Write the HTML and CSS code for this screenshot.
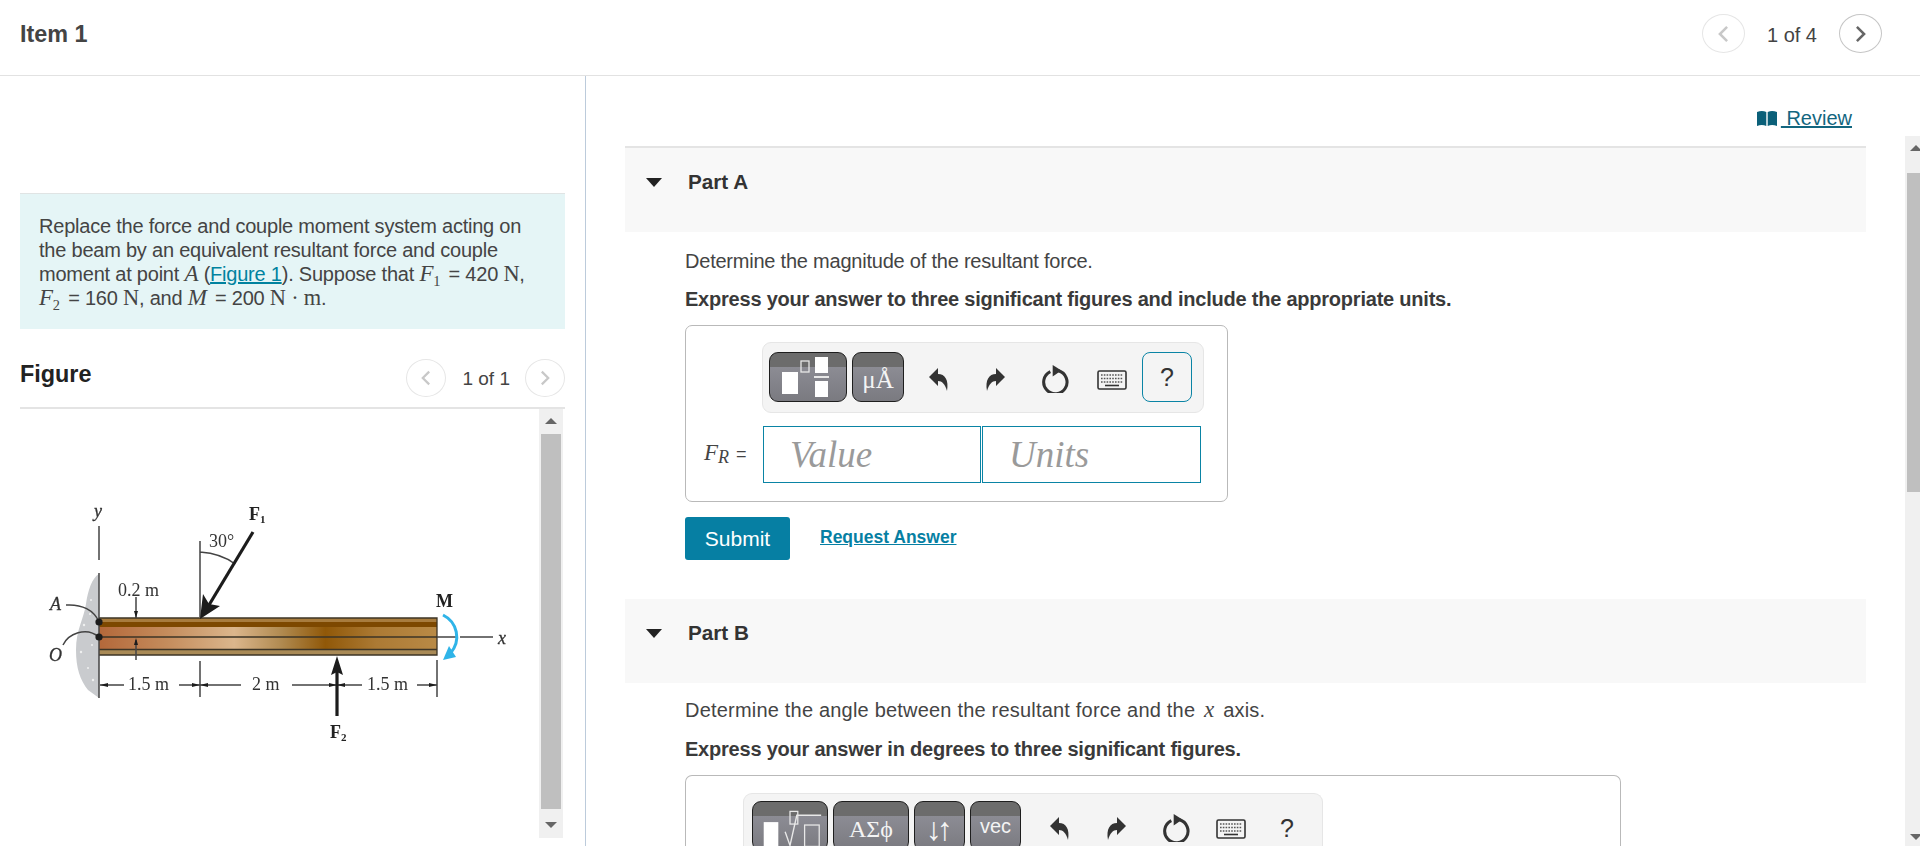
FILE: index.html
```html
<!DOCTYPE html>
<html lang="en">
<head>
<meta charset="utf-8">
<title>Item 1</title>
<link rel="stylesheet" href="styles.css">
</head>
<body>
<div class="app">
  <header class="top">
    <h1 class="item-title">Item 1</h1>
    <nav class="pager">
      <span class="circle circle-off"><svg viewBox="0 0 14 20" class="chev"><path d="M11 2 L3 10 L11 18"/></svg></span>
      <span class="pager-text">1 of 4</span>
      <span class="circle circle-on"><svg viewBox="0 0 14 20" class="chev"><path d="M3 2 L11 10 L3 18"/></svg></span>
    </nav>
  </header>
  <div class="panes">
    <aside class="left">
      <div class="intro">
        <p>Replace the force and couple moment system acting on the beam by an equivalent resultant force and couple moment at point <i class="m">A</i> (<a href="#">Figure 1</a>). Suppose that <i class="m">F</i><sub class="m">1</sub> = 420 <span class="m">N</span>, <i class="m">F</i><sub class="m">2</sub> = 160 <span class="m">N</span>, and <i class="m mm">M</i> = 200 <span class="m">N · m</span>.</p>
      </div>
      <div class="fig-head">
        <h2 class="fig-title">Figure</h2>
        <nav class="pager pager-small">
          <span class="circle circle-off"><svg viewBox="0 0 14 20" class="chev"><path d="M11 2 L3 10 L11 18"/></svg></span>
          <span class="pager-text">1 of 1</span>
          <span class="circle circle-off"><svg viewBox="0 0 14 20" class="chev"><path d="M3 2 L11 10 L3 18"/></svg></span>
        </nav>
      </div>
      <div class="fig-pane">
        <div class="fig-canvas">
          <svg class="beam" viewBox="20 500 519 260" width="519" height="260">
            <defs>
              <linearGradient id="wood" x1="0" x2="1" y1="0" y2="0">
                <stop offset="0" stop-color="#b4683a"/>
                <stop offset="0.2" stop-color="#c48c5c"/>
                <stop offset="0.4" stop-color="#dbb68c"/>
                <stop offset="0.54" stop-color="#b08a50"/>
                <stop offset="0.67" stop-color="#905808"/>
                <stop offset="0.82" stop-color="#ac7a34"/>
                <stop offset="1" stop-color="#b98a46"/>
              </linearGradient>
            </defs>
            <path class="wall" d="M99 574 C92 578 88 590 86 604 C84 618 76 630 76 650 C76 668 80 680 88 690 L99 698 Z"/>
            <g class="wall-spots"><circle cx="84" cy="625" r="1.2"/><circle cx="92" cy="645" r="1"/><circle cx="81" cy="652" r="1.2"/><circle cx="93" cy="680" r="1.2"/><circle cx="91" cy="600" r="1"/><circle cx="88" cy="668" r="1"/><circle cx="90" cy="614" r="1"/></g>
            <rect x="99" y="618" width="338" height="37" fill="url(#wood)"/>
            <rect x="99" y="618" width="338" height="5" fill="#a87c3e"/>
            <rect x="99" y="622" width="338" height="5" fill="#7d4800"/>
            <rect x="99" y="649" width="338" height="6" fill="#a98a56"/>
            <path class="ln" d="M99 618 H437 V655 H99"/>
            <path class="ln" d="M99 637 H437 M99 649.5 H437"/>
            <path class="thin" d="M99 526 V560 M99 573 V698"/>
            <path class="thin" d="M437 637 H458 M460 637 H493"/>
            <path class="thin" d="M200 541 V617 M200 552 C214 553 226 557 235 564"/>
            <path class="shaft" d="M253 532 L206 610"/>
            <path class="head" d="M200 619 L203 594 L209 604 L220 606 Z"/>
            <path class="thin" d="M136 597 V618 M136 640 V660"/>
            <path class="head" d="M136 618 L134 611 H138 Z M136 638 L134 645 H138 Z"/>
            <path class="thin" d="M66 605 C82 604 94 610 99 622 M63 645 C68 634 86 626 99 637"/>
            <circle cx="99" cy="622" r="3.6" fill="#1c1c1c"/><circle cx="99" cy="637" r="3.6" fill="#1c1c1c"/>
            <path class="thin" d="M200 661 V697 M437 660 V697 M100 685 H124 M179 685 H241 M292 685 H362 M417 685 H437"/>
            <path class="head" d="M100 685 L108 683 V687 Z M200 685 L192 683 V687 Z M200 685 L208 683 V687 Z M337 685 L329 683 V687 Z M337 685 L345 683 V687 Z M437 685 L429 683 V687 Z"/>
            <path class="shaft" d="M337 670 V716"/>
            <path class="head" d="M337 656 L343 675 L337 672 L331 675 Z"/>
            <path class="blue" d="M443 615 C457 622 462 640 450 654"/>
            <path class="blue-head" d="M443 660 L456 657 L449 646 Z"/>
            <text class="lab it" x="94" y="517">y</text>
            <text class="lab bd" x="249" y="520">F<tspan class="sb" dy="3">1</tspan></text>
            <text class="lab" x="209" y="547">30°</text>
            <text class="lab" x="118" y="596">0.2 m</text>
            <text class="lab bd" x="436" y="607">M</text>
            <text class="lab it" x="50" y="610">A</text>
            <text class="lab it" x="49" y="661">O</text>
            <text class="lab it" x="498" y="644">x</text>
            <text class="lab" x="128" y="690">1.5 m</text>
            <text class="lab" x="252" y="690">2 m</text>
            <text class="lab" x="367" y="690">1.5 m</text>
            <text class="lab bd" x="330" y="738">F<tspan class="sb" dy="3">2</tspan></text>
          </svg>
        </div>
        <div class="sbar sbar-fig">
          <span class="tri tri-up"></span>
          <span class="thumb"></span>
          <span class="tri tri-down"></span>
        </div>
      </div>
    </aside>
    <main class="right">
      <div class="content">
        <div class="review-row">
          <a class="review" href="#"><svg class="book" viewBox="0 0 20 16"><path d="M0 2 Q5 0 9.3 2 V16 Q5 14 0 16 Z M10.7 2 Q15 0 20 2 V16 Q15 14 10.7 16 Z"/></svg><span class="review-text">&nbsp;Review</span></a>
        </div>
        <section class="part">
          <div class="part-head"><span class="caret"></span><h3>Part A</h3></div>
          <div class="part-body">
            <p class="q">Determine the magnitude of the resultant force.</p>
            <p class="ask">Express your answer to three significant figures and include the appropriate units.</p>
            <div class="answer answer-a">
              <div class="toolbar toolbar-a">
                <span class="tbtn tbtn-tpl">
                  <svg viewBox="0 0 76 48" width="76" height="48">
                    <rect x="12" y="19" width="16" height="22" fill="#fff"/>
                    <rect x="31" y="8" width="8" height="11" fill="none" stroke="#e8e8e8" stroke-width="1.3"/>
                    <rect x="45" y="4" width="13" height="16" fill="#fff"/>
                    <rect x="44" y="23" width="15" height="2" fill="#e8e8e8"/>
                    <rect x="45" y="28" width="13" height="16" fill="#fff"/>
                  </svg>
                </span>
                <span class="tbtn tbtn-ua">μÅ</span>
                <span class="tools">
                  <svg class="ic" viewBox="0 0 24 26"><path class="ic-f" d="M2 11 L11 2 V8 C18 8 22 14 20 25 C18 18 15 15 11 15 V20 Z"/></svg>
                  <svg class="ic" viewBox="0 0 24 26"><path class="ic-f" d="M22 11 L13 2 V8 C6 8 2 14 4 25 C6 18 9 15 13 15 V20 Z"/></svg>
                  <svg class="ic ic-reset" viewBox="0 0 24 24"><path class="ic-s" d="M8 5.6 A10 10 0 1 0 15 5"/><path class="ic-f" d="M10 0 L17.5 4.8 L10 9.8 Z"/></svg>
                  <svg class="ic ic-kb" viewBox="0 0 30 20"><rect x="1" y="1" width="28" height="18" rx="1.5" fill="none" stroke="#333" stroke-width="1.6"/><path d="M4 5 H26 M4 8.5 H26 M4 12 H26" stroke="#555" stroke-width="1.4" stroke-dasharray="1.6 1.2"/><path d="M8 15.5 H22" stroke="#333" stroke-width="1.6"/></svg>
                </span>
                <span class="help help-box">?</span>
              </div>
              <div class="entry">
                <span class="fr"><i class="m">F</i><sub class="m"><i>R</i></sub> <span class="fr-eq">=</span></span>
                <input class="field" placeholder="Value" aria-label="Value">
                <input class="field field-units" placeholder="Units" aria-label="Units">
              </div>
            </div>
            <div class="actions">
              <button class="submit">Submit</button>
              <a class="req" href="#">Request Answer</a>
            </div>
          </div>
        </section>
        <section class="part part-b">
          <div class="part-head"><span class="caret"></span><h3>Part B</h3></div>
          <div class="part-body">
            <p class="q">Determine the angle between the resultant force and the <i class="m mx">x</i> axis.</p>
            <p class="ask">Express your answer in degrees to three significant figures.</p>
            <div class="answer answer-b">
              <div class="toolbar toolbar-b">
                <span class="tbtn tbtn-root">
                  <svg viewBox="0 0 76 48" width="75" height="48">
                    <rect x="11" y="20" width="15" height="26" fill="#fff"/>
                    <rect x="38" y="9" width="8" height="13" fill="none" stroke="#e8e8e8" stroke-width="1.3"/>
                    <path d="M33 30 L38 44 L45 13 H70" fill="none" stroke="#e8e8e8" stroke-width="1.4"/>
                    <rect x="53" y="23" width="15" height="22" fill="none" stroke="#e8e8e8" stroke-width="1.3"/>
                  </svg>
                </span>
                <span class="tbtn tbtn-greek">ΑΣϕ</span>
                <span class="tbtn tbtn-arr">↓↑</span>
                <span class="tbtn tbtn-vec">vec</span>
                <span class="tools tools-b">
                  <svg class="ic" viewBox="0 0 24 26"><path class="ic-f" d="M2 11 L11 2 V8 C18 8 22 14 20 25 C18 18 15 15 11 15 V20 Z"/></svg>
                  <svg class="ic" viewBox="0 0 24 26"><path class="ic-f" d="M22 11 L13 2 V8 C6 8 2 14 4 25 C6 18 9 15 13 15 V20 Z"/></svg>
                  <svg class="ic ic-reset" viewBox="0 0 24 24"><path class="ic-s" d="M8 5.6 A10 10 0 1 0 15 5"/><path class="ic-f" d="M10 0 L17.5 4.8 L10 9.8 Z"/></svg>
                  <svg class="ic ic-kb" viewBox="0 0 30 20"><rect x="1" y="1" width="28" height="18" rx="1.5" fill="none" stroke="#333" stroke-width="1.6"/><path d="M4 5 H26 M4 8.5 H26 M4 12 H26" stroke="#555" stroke-width="1.4" stroke-dasharray="1.6 1.2"/><path d="M8 15.5 H22" stroke="#333" stroke-width="1.6"/></svg>
                  <span class="help">?</span>
                </span>
              </div>
            </div>
          </div>
        </section>
      </div>
      <div class="sbar sbar-main">
        <span class="tri tri-up"></span>
        <span class="thumb"></span>
        <span class="tri tri-down"></span>
      </div>
    </main>
  </div>
</div>
</body>
</html>
```
FILE: styles.css
```css
* { box-sizing: border-box; }
html, body { margin: 0; height: 100%; overflow: hidden; background: #fff; }
body { font-family: "Liberation Sans", Arial, sans-serif; font-size: 18px; color: #444; }
.app { height: 846px; display: flex; flex-direction: column; overflow: hidden; }
p, h1, h2, h3 { margin: 0; }
a { color: #00738f; }

.top { height: 76px; flex: none; border-bottom: 1px solid #e2e2e2; display: flex; justify-content: space-between; align-items: flex-start; padding: 0 38px 0 20px; }
.item-title { font-size: 23.4px; font-weight: bold; color: #444; line-height: 26px; margin-top: 21px; }
.pager { display: flex; align-items: center; margin-top: 14px; }
.pager-text { font-size: 20px; color: #444; margin: 4px 22px 0; }
.circle { width: 43px; height: 39px; border-radius: 50%; display: flex; align-items: center; justify-content: center; background: #fff; }
.circle-off { border: 1.5px solid #e6e6e6; }
.circle-on { border: 1.5px solid #c6c6c6; }
.chev { width: 13px; height: 18px; fill: none; stroke-width: 2.8; }
.circle-off .chev { stroke: #c8c8c8; }
.circle-on .chev { stroke: #666; }

.panes { flex: 1; min-height: 0; display: flex; }
.left { width: 586px; flex: none; border-right: 1px solid #bccbdb; padding: 117px 20px 0; display: flex; flex-direction: column; min-height: 0; }
.intro { height: 136px; flex: none; background: #e5f5f6; border-top: 1px solid #e0e4e4; padding: 20px 20px 0 19px; font-size: 20px; letter-spacing: -0.22px; line-height: 24px; color: #444; }
.intro a { color: #00829f; }
.m { font-family: "Liberation Serif", serif; font-size: 1.12em; line-height: 0; }
i.m { font-size: 1.15em; }
sub.m { font-size: 0.72em; line-height: 0; margin-right: 3px; }
.mm { margin-right: 3px; }
.mx { margin: 0 3px; }

.fig-head { height: 80px; flex: none; border-bottom: 2px solid #e4e4e4; display: flex; justify-content: space-between; align-items: flex-start; }
.fig-title { font-size: 23.4px; font-weight: bold; color: #222; line-height: 26px; margin-top: 32px; }
.pager-small { margin-top: 30px; }
.pager-small .pager-text { font-size: 19px; margin: 2px 15px 0 16px; }
.pager-small .circle { width: 40px; height: 38px; }
.pager-small .chev { width: 12px; height: 16px; }

.fig-pane { flex: 1; min-height: 0; display: flex; }
.fig-canvas { width: 519px; flex: none; padding-top: 91px; }
.beam { display: block; filter: blur(0.35px); }
.wall { fill: #c9cbce; }
.wall-spots { fill: #eff0f0; }
.ln { fill: none; stroke: #3c3426; stroke-width: 1.3; }
.thin { fill: none; stroke: #444; stroke-width: 1.5; }
.shaft { fill: none; stroke: #1c1c1c; stroke-width: 3.2; }
.head { fill: #1c1c1c; }
.blue { fill: none; stroke: #2fb4e8; stroke-width: 3; }
.blue-head { fill: #2fb4e8; }
.lab { font-family: "Liberation Serif", serif; font-size: 18px; fill: #333; }
.it { font-style: italic; stroke: #333; stroke-width: 0.3; }
.bd { font-weight: bold; fill: #222; font-size: 18px; }
.sb { font-size: 11px; }

.sbar { background: #f0f0f0; display: flex; flex-direction: column; align-items: center; flex: none; }
.sbar-fig { width: 24px; height: 429px; padding: 9px 2px 9px; }
.sbar-main { width: 15px; margin-top: 60px; height: 710px; padding: 9px 0 5px 2px; }
.thumb { background: #bfbfbf; width: 100%; display: block; flex: none; }
.sbar-fig .thumb { height: 375px; margin: 10px 0 13px; }
.sbar-main .thumb { height: 319px; margin: 22px 0 342px; }
.sbar-main .tri { margin-left: 5px; }
.tri { width: 0; height: 0; border-left: 6px solid transparent; border-right: 6px solid transparent; flex: none; }
.tri-up { border-bottom: 6px solid #666; }
.tri-down { border-top: 6px solid #666; }

.right { flex: 1; min-width: 0; display: flex; min-height: 0; }
.content { flex: 1; min-width: 0; padding: 0 39px; overflow: hidden; }
.review-row { height: 70px; display: flex; justify-content: flex-end; padding: 29px 14px 0 0; }
.review { font-size: 20px; line-height: 26px; color: #13667f; display: inline-flex; align-items: center; height: 26px; }
.book { width: 20px; height: 16px; fill: #0b6079; margin-right: 4px; }

.part-head { height: 86px; background: #f8f8f8; border-top: 2px solid #e4e4e4; display: flex; align-items: flex-start; padding: 21px 0 0 21px; }
.part-b .part-head { height: 84px; border-top: 0; padding-top: 21px; }
.caret { width: 0; height: 0; border-left: 8px solid transparent; border-right: 8px solid transparent; border-top: 9px solid #222; margin-top: 9px; }
.part-head h3 { font-size: 20.7px; font-weight: bold; color: #333; line-height: 26px; margin-left: 26px; }
.part-body { padding-left: 60px; }
.q { font-size: 20px; letter-spacing: -0.22px; line-height: 24px; margin-top: 17px; color: #444; }
.part-b .q { margin-top: 15px; letter-spacing: 0.2px; }
.ask { font-size: 20px; letter-spacing: -0.22px; font-weight: bold; line-height: 24px; margin-top: 14px; color: #3a3a3a; }
.part-b .ask { margin-top: 15px; }
.answer { border: 1px solid #b9b9b9; border-radius: 7px; background: #fff; margin-top: 14px; }
.answer-a { width: 543px; height: 177px; padding: 16px 0 0 76px; }
.answer-b { width: 936px; height: 90px; border-bottom: 0; padding: 17px 0 0 57px; border-radius: 7px 7px 0 0; }
.toolbar { background: #f4f4f4; border: 1px solid #e6e6e6; border-radius: 9px; display: flex; align-items: flex-start; }
.toolbar-a { height: 71px; width: 442px; padding: 9px 0 0 6px; }
.toolbar-b { width: 580px; height: 70px; padding: 7px 0 0 8px; border-bottom: 0; border-radius: 9px 9px 0 0; }
.tbtn { height: 50px; border: 1px solid #1e1e1e; border-radius: 9px; background: linear-gradient(#6c6c6c 0 14px, #8c8c94 14px, #7a7a80 100%); color: #f4f4f4; display: flex; align-items: center; justify-content: center; flex: none; margin-right: 5px; overflow: hidden; }
.tbtn-tpl { width: 78px; }
.tbtn-ua { width: 52px; font-family: "Liberation Serif", serif; font-size: 25px; padding-top: 6px; }
.tbtn-root { width: 76px; }
.tbtn-greek { width: 76px; font-family: "Liberation Serif", serif; font-size: 24px; padding-top: 6px; }
.tbtn-arr { width: 51px; font-family: "Liberation Serif", serif; font-size: 32px; letter-spacing: -5px; padding: 6px 5px 0 0; }
.tbtn-vec { width: 51px; font-size: 20px; }
.tools { display: flex; align-items: center; height: 50px; padding-left: 18px; gap: 32px; }
.tools-b { padding-left: 22px; }
.ic { width: 24px; height: 26px; flex: none; margin-top: 3px; }
.ic-reset { width: 28px; height: 28px; margin-left: 2px; margin-top: 4px; }
.ic-f { fill: #333; }
.ic-s { fill: none; stroke: #333; stroke-width: 2.6; }
.ic-kb { width: 30px; height: 20px; margin-left: -4px; margin-top: 5px; }
.tools-b .ic-kb { margin-left: -6px; }
.help { font-size: 25px; color: #333; }
.help-box { width: 50px; height: 50px; border: 1px solid #0a84a5; border-radius: 8px; display: flex; align-items: center; justify-content: center; margin-left: 15px; flex: none; }
.tools-b .help { margin-left: 2px; margin-top: 4px; }
.entry { display: flex; align-items: center; margin-top: 13px; margin-left: -58px; }
.fr { width: 59px; font-size: 18px; white-space: nowrap; color: #444; }
.fr i.m { font-size: 23px; }
.fr sub.m { font-size: 18px; vertical-align: -3px; margin-right: 0; }
.fr-eq { margin-left: 2px; }
.field { width: 218px; height: 57px; border: 1.5px solid #0a84a5; font-family: "Liberation Serif", serif; font-style: italic; font-size: 37px; padding: 0 0 0 26px; margin-right: 1px; background: #fff; outline: 0; border-radius: 0; }
.field-units { width: 219px; margin-right: 0; }
.field::placeholder { color: #9a9a9a; opacity: 1; }
.actions { display: flex; align-items: center; margin-top: 15px; margin-bottom: 39px; }
.submit { width: 105px; height: 43px; background: #067fa3; border: 0; border-radius: 3px; color: #fff; font-family: "Liberation Sans", Arial, sans-serif; font-size: 21px; font-weight: normal; padding: 0; }
.req { margin-left: 30px; font-size: 17.5px; font-weight: bold; color: #067fa3; margin-top: -2px; }
```
